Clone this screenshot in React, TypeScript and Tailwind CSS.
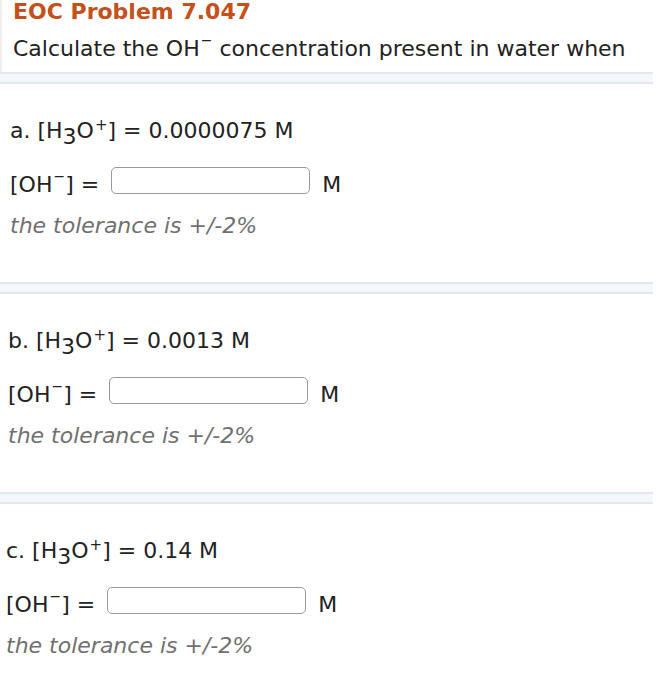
import React from "react";

type Part = { label: string; value: string; pad: string };

const parts: Part[] = [
    { label: "a.", value: "0.0000075", pad: "pl-[10px]" },
    { label: "b.", value: "0.0013", pad: "pl-[8px]" },
    { label: "c.", value: "0.14", pad: "pl-[6px]" },
];

// plain spans: preflight's sup/sub offsets make them sit too far out
function Minus() {
    return <span className="ml-[1px] text-[14px] align-[11px] leading-none">−</span>;
}

function Separator() {
    return <div className="h-[12px] w-[653px] border-y-2 border-[#e6e7ee] bg-[#f4f7fb]" />;
}

function PartBlock({ part }: { part: Part }) {
    return (
        <div className={`${part.pad} h-[198px] flex flex-col`}>
            <p className="mt-[34px] leading-[26px]">
                {part.label} [H<span className="align-[-6px] leading-none">3</span>O
                <span className="ml-[1px] text-[15px] align-[8px] leading-none">+</span>] = {part.value} M
            </p>
            <div className="mt-[19px] flex items-end">
                <span className="leading-[26px]">
                    [OH<Minus />] =
                </span>
                <input
                    type="text"
                    className="ml-[12px] mb-[4px] h-[27px] w-[199px] rounded-[5px] border border-[#9a9a9a] bg-white"
                />
                <span className="ml-[12px] leading-[26px]">M</span>
            </div>
            <p className="mt-[15px] leading-[26px] italic text-[#707070]">the tolerance is +/-2%</p>
        </div>
    );
}

export default function App() {
    return (
        <div className="w-[656px] h-[700px] overflow-hidden bg-white font-['DejaVu_Sans','Verdana',sans-serif] text-[22px] text-[#222]">
            <div className="h-[72px] border-l-2 border-[#eeeeee] pl-[11px] flex flex-col">
                <h1 className="font-bold leading-[24px] text-[#c4501b]">EOC Problem 7.047</h1>
                <p className="mt-[9px] leading-[26px] whitespace-nowrap">
                    Calculate the OH<Minus /> concentration present in water when
                </p>
            </div>
            {parts.map((part, i) => (
                <div key={i}>
                    <Separator />
                    <PartBlock part={part} />
                </div>
            ))}
        </div>
    );
}
